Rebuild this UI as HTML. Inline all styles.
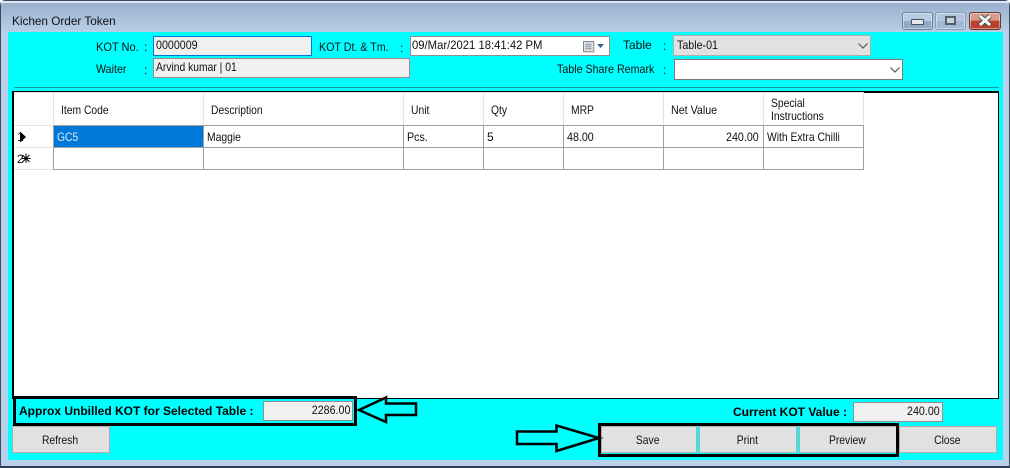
<!DOCTYPE html>
<html><head><meta charset="utf-8"><style>
html,body{margin:0;padding:0;width:1010px;height:468px;overflow:hidden;background:#fff}
body{font-family:"Liberation Sans",sans-serif;font-size:12px;color:#111;position:relative}
div,span{position:absolute;box-sizing:border-box;white-space:nowrap}
.t{line-height:14px;transform-origin:left center}
.b{font-weight:bold;color:#000}
.in{background:#f0f0f0;border:1px solid #8f8f8f;padding-left:2px;line-height:16px}
.btn{background:#e1e1e1;border:1px solid #adadad;text-align:center;line-height:26px;height:27px;padding-right:2px}
i{font-style:normal;display:inline-block;transform-origin:left center}
i.r{transform-origin:right center}
i.c{transform-origin:center center}
.s86{transform:scaleX(.86)}
.s89{transform:scaleX(.89)}
.s92{transform:scaleX(.92)}
.v{background:#a0a0a0;width:1px;top:125px;height:45px}
.hv{background:#e4e4e4;width:1px;top:93px;height:32px}
.h{background:#a0a0a0;height:1px;left:53px;width:811px}
.w{height:18px;top:12px;border-radius:3px;border:1px solid #6f829c;box-shadow:inset 0 0 0 1px rgba(255,255,255,.45)}
</style></head><body>
<div style="left:0;top:0;width:1010px;height:468px;background:#b9d1ea;border:1px solid #3a4a5c;border-radius:5px 5px 0 0;border-bottom:2px solid #2c3e50"></div>
<div style="left:1px;top:3px;width:1008px;height:29px;background:linear-gradient(#99b1ce,#b8cee6);border-radius:4px 4px 0 0"></div>
<div style="left:1px;top:1px;width:1008px;height:2px;background:#dde6f0"></div>
<div class="t" style="left:12px;top:14px;transform:scaleX(.98)">Kichen Order Token</div>

<div class="w" style="left:902px;width:31px;background:linear-gradient(#b7cbe2 50%,#8eaac8 50%)"></div>
<div style="left:911px;top:19px;width:13px;height:6px;background:#e6e9ee;border:1px solid #47525f;border-radius:1px"></div>
<div class="w" style="left:935px;width:31px;background:linear-gradient(#b2c7df 50%,#a0b9d4 50%);border-color:#8a9db8"></div>
<div style="left:945px;top:16px;width:11px;height:9px;border:2px solid #56606c;background:#c5d5e6"></div>
<div class="w" style="left:969px;width:32px;background:linear-gradient(#d99a8c 45%,#b8412e 50%);border-color:#5f3b3b"></div>
<svg style="position:absolute;left:977px;top:14px" width="16" height="13"><path d="M3 2L13 11M13 2L3 11" stroke="#4a4a52" stroke-width="5"/><path d="M3 2L13 11M13 2L3 11" stroke="#f4f4f4" stroke-width="3"/></svg>

<div style="left:8px;top:32px;width:995px;height:428px;background:#0ff"></div>
<div style="left:14px;top:87px;width:985px;height:1px;background:#1a9c9c"></div>

<div class="t s92" style="left:96px;top:40px">KOT No.</div><div class="t" style="left:144px;top:40px">:</div>
<div class="t s89" style="left:96px;top:62px">Waiter</div><div class="t" style="left:144px;top:63px">:</div>
<div class="in" style="left:153px;top:36px;width:159px;height:20px;border-color:#0078d7"><i class="s89">0000009</i></div>
<div class="in" style="left:153px;top:58px;width:257px;height:20px;line-height:17px"><i class="s86">Arvind kumar | 01</i></div>
<div class="t s89" style="left:319px;top:40px">KOT Dt. &amp; Tm.</div><div class="t" style="left:400px;top:41px">:</div>
<div class="in" style="left:410px;top:36px;width:200px;height:20px;background:#fff;padding-left:1px"><i style="transform:scaleX(.94)">09/Mar/2021 18:41:42 PM</i></div>
<svg style="position:absolute;left:582px;top:40px" width="26" height="13"><rect x="1.500" y="1.500" width="10" height="10" fill="#dfe3e8" stroke="#808890"/><path d="M3 4.500H10M3 6.500H10M3 8.500H10M5 3V10M7.500 3V10" stroke="#a0a8b0"/><path d="M12 3V12H3" fill="none" stroke="#bbb"/><path d="M15 4H22L18.500 8Z" fill="#3b5f8a"/></svg>
<div class="t" style="left:623px;top:38px">Table</div><div class="t" style="left:663px;top:39px">:</div>
<div class="t s89" style="left:557px;top:62px">Table Share Remark</div><div class="t" style="left:663px;top:63px">:</div>
<div class="in" style="left:673px;top:35px;width:198px;height:21px;background:#e1e1e1;border-color:#adadad;line-height:18px;padding-left:3px"><i class="s89">Table-01</i></div>
<svg style="position:absolute;left:857px;top:42px" width="12" height="8"><path d="M1.500 1.500L6 6L10.500 1.500" fill="none" stroke="#555" stroke-width="1.200"/></svg>
<div class="in" style="left:674px;top:59px;width:229px;height:21px;background:#fff;border-color:#7a7a7a"></div>
<svg style="position:absolute;left:889px;top:66px" width="12" height="8"><path d="M1.500 1.500L6 6L10.500 1.500" fill="none" stroke="#555" stroke-width="1.200"/></svg>

<div style="left:12px;top:91px;width:987px;height:308px;background:#fff;border:1px solid #000;border-top-width:2px;border-left-width:2px"></div>
<div class="hv" style="left:53px"></div><div class="hv" style="left:203px"></div><div class="hv" style="left:403px"></div><div class="hv" style="left:483px"></div><div class="hv" style="left:563px"></div><div class="hv" style="left:663px"></div><div class="hv" style="left:763px"></div><div class="hv" style="left:863px"></div>
<div style="left:14px;top:92px;width:850px;height:1px;background:#e4e4e4"></div>
<div style="left:14px;top:125px;width:39px;height:1px;background:#e4e4e4"></div>
<div style="left:14px;top:147px;width:39px;height:1px;background:#e4e4e4"></div>
<div style="left:14px;top:169px;width:39px;height:1px;background:#e4e4e4"></div>
<div class="h" style="top:125px"></div><div class="h" style="top:147px"></div><div class="h" style="top:169px"></div>
<div class="v" style="left:53px"></div><div class="v" style="left:203px"></div><div class="v" style="left:403px"></div><div class="v" style="left:483px"></div><div class="v" style="left:563px"></div><div class="v" style="left:663px"></div><div class="v" style="left:763px"></div><div class="v" style="left:863px"></div>
<div style="left:54px;top:126px;width:149px;height:21px;background:#0078d7"></div>

<div class="t s86" style="left:61px;top:103px">Item Code</div>
<div class="t s86" style="left:211px;top:103px">Description</div>
<div class="t s86" style="left:411px;top:103px">Unit</div>
<div class="t s86" style="left:491px;top:103px">Qty</div>
<div class="t s86" style="left:571px;top:103px">MRP</div>
<div class="t s89" style="left:671px;top:103px">Net Value</div>
<div class="t s86" style="left:771px;top:96px">Special</div>
<div class="t s86" style="left:771px;top:109px">Instructions</div>

<div class="t" style="left:17px;top:130px">1</div>
<svg style="position:absolute;left:18px;top:131px" width="10" height="12"><path d="M2 .5L8 6L2 11.500Z" fill="#000"/></svg>
<div class="t" style="left:17px;top:152px">2</div>
<svg style="position:absolute;left:21px;top:153px" width="10" height="11"><path d="M5 .5V10M.5 5.500H9.500M1.500 2L8.500 9M8.500 2L1.500 9" stroke="#000"/></svg>

<div class="t s86" style="left:57px;top:130px;color:#dce9f7">GC5</div>
<div class="t s86" style="left:207px;top:130px">Maggie</div>
<div class="t s89" style="left:407px;top:130px">Pcs.</div>
<div class="t" style="left:487px;top:130px">5</div>
<div class="t s89" style="left:567px;top:130px">48.00</div>
<div class="t" style="left:663px;top:130px;width:96px;text-align:right"><i class="r s89">240.00</i></div>
<div class="t s86" style="left:767px;top:130px">With Extra Chilli</div>

<div style="left:13px;top:396px;width:344px;height:30px;border:3px solid #000"></div>
<div class="t b" style="left:19px;top:404px">Approx Unbilled KOT for Selected Table :</div>
<div class="in" style="left:263px;top:401px;width:90px;height:20px;text-align:right;padding-right:2px"><i class="r s89">2286.00</i></div>
<svg style="position:absolute;left:350px;top:390px" width="75" height="40"><path d="M9 20L36 7.500V13.500H66V25H36V32Z" fill="none" stroke="#000" stroke-width="2.500"/></svg>

<div class="t b" style="left:733px;top:405px">Current KOT Value :</div>
<div class="in" style="left:853px;top:402px;width:90px;height:20px;text-align:right;padding-right:2px"><i class="r s89">240.00</i></div>

<div class="btn" style="left:12px;top:426px;width:98px"><i class="c s86">Refresh</i></div>
<div class="btn" style="left:601px;top:426px;width:96px"><i class="c s86">Save</i></div>
<div class="btn" style="left:699px;top:426px;width:98px"><i class="c s86">Print</i></div>
<div class="btn" style="left:799px;top:426px;width:98px"><i class="c s86">Preview</i></div>
<div class="btn" style="left:899px;top:426px;width:98px"><i class="c s86">Close</i></div>
<div style="left:598px;top:423px;width:301px;height:34px;border:3px solid #000"></div>
<svg style="position:absolute;left:510px;top:418px" width="95" height="40"><path d="M7 13.500H46.500V7.500L89 20L46.500 33V26H7Z" fill="none" stroke="#000" stroke-width="2.500"/></svg>
</body></html>
